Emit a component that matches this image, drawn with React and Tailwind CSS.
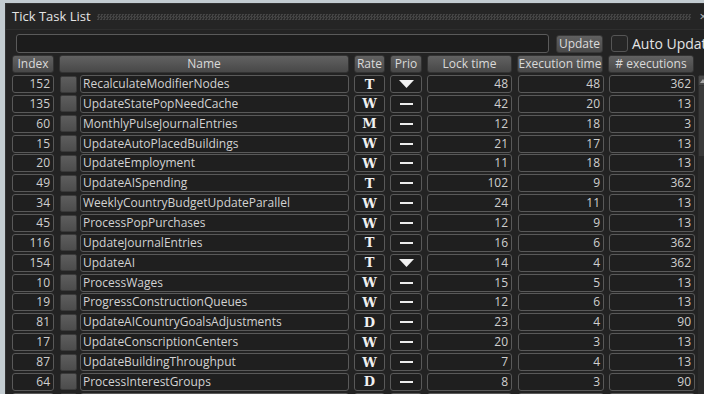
import React from "react";

const rows = [
  [152, "RecalculateModifierNodes", "T", "down", 48, 48, 362],
  [135, "UpdateStatePopNeedCache", "W", "dash", 42, 20, 13],
  [60, "MonthlyPulseJournalEntries", "M", "dash", 12, 18, 3],
  [15, "UpdateAutoPlacedBuildings", "W", "dash", 21, 17, 13],
  [20, "UpdateEmployment", "W", "dash", 11, 18, 13],
  [49, "UpdateAISpending", "T", "dash", 102, 9, 362],
  [34, "WeeklyCountryBudgetUpdateParallel", "W", "dash", 24, 11, 13],
  [45, "ProcessPopPurchases", "W", "dash", 12, 9, 13],
  [116, "UpdateJournalEntries", "T", "dash", 16, 6, 362],
  [154, "UpdateAI", "T", "down", 14, 4, 362],
  [10, "ProcessWages", "W", "dash", 15, 5, 13],
  [19, "ProgressConstructionQueues", "W", "dash", 12, 6, 13],
  [81, "UpdateAICountryGoalsAdjustments", "D", "dash", 23, 4, 90],
  [17, "UpdateConscriptionCenters", "W", "dash", 20, 3, 13],
  [87, "UpdateBuildingThroughput", "W", "dash", 7, 4, 13],
  [64, "ProcessInterestGroups", "D", "dash", 8, 3, 90],
];

const headers = [
  ["Index", "w-[42px]"],
  ["Name", "w-[290px]"],
  ["Rate", "w-[31px]"],
  ["Prio", "w-[32px]"],
  ["Lock time", "w-[85px]"],
  ["Execution time", "w-[86px]"],
  ["# executions", "w-[86px]"],
];

const cell = "h-[18px] shrink-0 rounded-[3px] border border-[#595959] bg-[#1f1f1f] leading-none overflow-hidden";
const num = `${cell} flex items-center justify-end pr-[3px] text-[12px] text-[#cfcfcf]`;

const Row = ({ r }) => (
  <div className="flex items-center h-[18px] gap-x-[5px] mb-[1.87px]">
    <div className={`${num} w-[42px]`}>{r[0]}</div>
    <div className="w-[290px] h-[18px] shrink-0 flex items-center gap-[3px] pl-[1px]">
      <div className="w-[17px] h-[17px] shrink-0 rounded-[2px] bg-gradient-to-b from-[#5e5e5e] to-[#4c4c4c] border border-[#3a3a3a]" />
      <div className={`${cell} flex-1 flex items-center pl-[2px] text-[12px] text-[#d2d2d2] whitespace-nowrap`}>
        {r[1]}
      </div>
    </div>
    <div
      className={`${cell} w-[31px] flex items-center justify-center text-[13px] font-bold text-[#f0f0f0]`}
      style={{ fontFamily: '"DejaVu Serif", "Liberation Serif", serif' }}
    >
      {r[2]}
    </div>
    <div className={`${cell} w-[32px] flex items-center justify-center`}>
      {r[3] === "down" ? (
        <svg width="15" height="8" viewBox="0 0 15 8">
          <path d="M0 0 L15 0 L7.5 8 Z" fill="#f2f2f2" />
        </svg>
      ) : (
        <div className="w-[13px] h-[2px] bg-[#ececec]" />
      )}
    </div>
    <div className={`${num} w-[85px]`}>{r[4]}</div>
    <div className={`${num} w-[86px] ml-[1px]`}>{r[5]}</div>
    <div className={`${num} w-[86px]`}>{r[6]}</div>
  </div>
);

const App = () => {
  return (
    <div
      className="w-[704px] h-[394px] overflow-hidden bg-[#c3ccd1] pt-[3px] pl-[5px]"
      style={{ fontFamily: '"Open Sans", "Noto Sans", sans-serif' }}
    >
      <div className="w-[720px] h-[400px] bg-[#232323] border-l border-t border-[#333]">
        {/* Title bar */}
        <div className="h-[26px] flex items-center pl-[6px] border-b border-[#2e2e2e] bg-[#252525]">
          <span className="text-[13px] text-[#e4e4e4] leading-none">Tick Task List</span>
          <div className="ml-[6px] w-[594px] h-[6px] bg-[repeating-conic-gradient(#444_0_25%,#2a2a2a_0_50%)] bg-[length:3px_3px]" />
          <span className="ml-[9px] text-[13px] text-[#bbb] leading-none">×</span>
        </div>

        {/* Search row */}
        <div className="flex items-center mt-[4px] pl-[10px] h-[19px]">
          <div className="w-[533px] h-[19px] shrink-0 rounded-[3px] border border-[#5a5a5a] bg-[#1c1c1c]" />
          <button className="ml-[7px] w-[47px] h-[18px] shrink-0 rounded-[3px] border border-[#383838] bg-gradient-to-b from-[#606060] to-[#4a4a4a] text-[12px] text-[#dcdcdc] leading-none">
            Update
          </button>
          <div className="ml-[8px] w-[17px] h-[17px] shrink-0 rounded-[3px] border border-[#555] bg-[#262626]" />
          <span className="ml-[4px] text-[14px] text-[#e4e4e4] whitespace-nowrap leading-none">Auto Update</span>
        </div>

        {/* Table */}
        <div className="flex mt-[2px] pl-[6px]">
          <div className="flex flex-col">
            <div className="flex items-center h-[18px] gap-x-[5px] mb-[2px]">
              {headers.map(([h, w]) => (
                <div
                  key={h}
                  className={`${w} h-[18px] shrink-0 rounded-[3px] border border-[#333] bg-gradient-to-b from-[#626262] to-[#484848] flex items-center justify-center text-[12px] text-[#dadada] leading-none whitespace-nowrap`}
                >
                  {h}
                </div>
              ))}
            </div>
            {rows.map((r) => (
              <Row key={r[0]} r={r} />
            ))}
            <Row r={[12, "UpdateMarkets", "W", "dash", 6, 3, 13]} />
          </div>

          {/* Scrollbar */}
          <div className="ml-[3px] mt-[20px] w-[10px] flex flex-col">
            <div className="h-[11px] rounded-t-[2px] bg-[#4a4a4a] border border-[#333] flex items-center justify-center">
              <svg width="6" height="4" viewBox="0 0 6 4">
                <path d="M0 4 L3 0 L6 4 Z" fill="#aaa" />
              </svg>
            </div>
            <div className="h-[70px] bg-[#3a3a3a] border-x border-[#2c2c2c]" />
            <div className="h-[300px] bg-[#2a2a2a]" />
          </div>
        </div>
      </div>
    </div>
  );
};

export default App;
